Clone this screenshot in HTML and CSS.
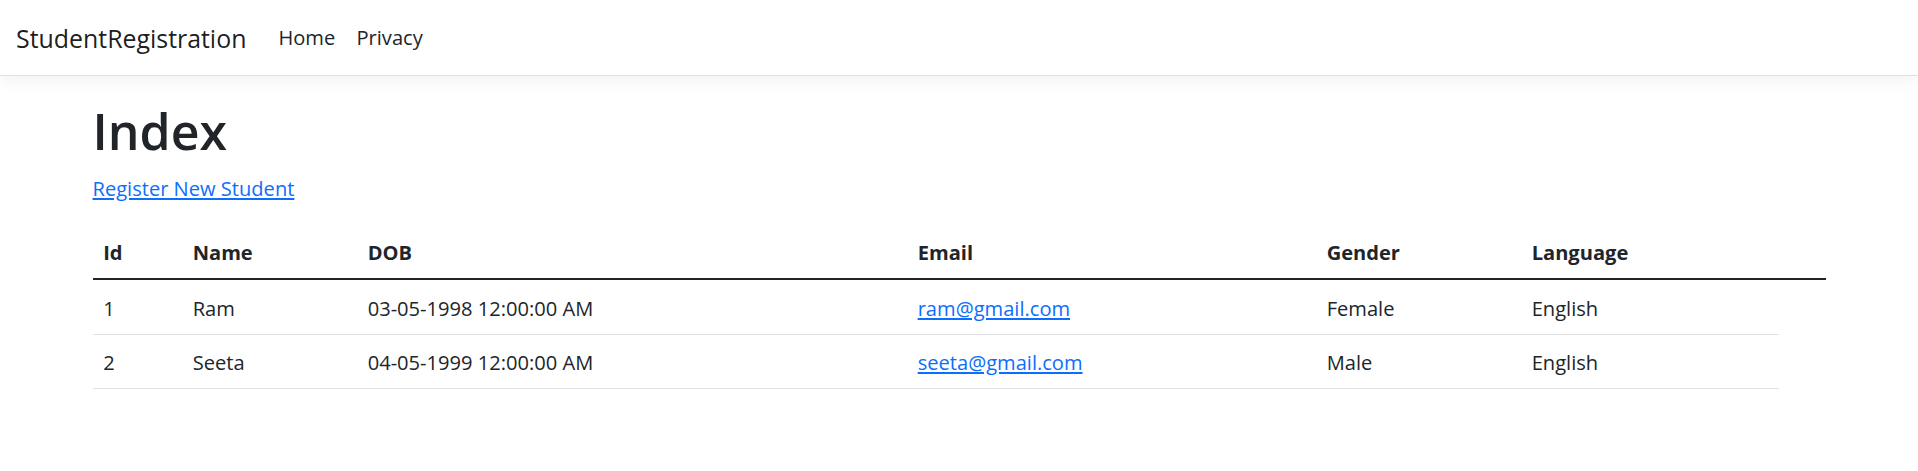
FILE: index.html
```html
<!DOCTYPE html>
<html lang="en">
<head>
<meta charset="utf-8">
<title>Index - StudentRegistration</title>
<link rel="stylesheet" href="styles.css">
</head>
<body>
<header>
  <nav class="navbar">
    <a class="brand" href="#">StudentRegistration</a>
    <ul class="nav">
      <li><a class="nav-link" href="#">Home</a></li>
      <li><a class="nav-link" href="#">Privacy</a></li>
    </ul>
  </nav>
</header>
<main class="container">
  <h1 class="title">Index</h1>
  <p class="actions"><a class="link" href="#">Register New Student</a></p>
  <table class="table">
    <colgroup>
      <col class="c-id">
      <col class="c-name">
      <col class="c-dob">
      <col class="c-email">
      <col class="c-gender">
      <col class="c-lang">
      <col class="c-extra">
    </colgroup>
    <thead>
      <tr>
        <th>Id</th>
        <th>Name</th>
        <th>DOB</th>
        <th>Email</th>
        <th>Gender</th>
        <th>Language</th>
        <th></th>
      </tr>
    </thead>
    <tbody>
      <tr>
        <td>1</td>
        <td>Ram</td>
        <td>03-05-1998 12:00:00 AM</td>
        <td><a class="link" href="#">ram@gmail.com</a></td>
        <td>Female</td>
        <td>English</td>
      </tr>
      <tr>
        <td>2</td>
        <td>Seeta</td>
        <td>04-05-1999 12:00:00 AM</td>
        <td><a class="link" href="#">seeta@gmail.com</a></td>
        <td>Male</td>
        <td>English</td>
      </tr>
    </tbody>
  </table>
</main>
</body>
</html>
```
FILE: styles.css
```css
* { box-sizing: border-box; }

html, body {
  margin: 0;
  padding: 0;
  background: #fff;
}

body {
  font-family: "Open Sans", "Noto Sans", "Liberation Sans", sans-serif;
  font-size: 20.1px;
  line-height: 32px;
  color: #212529;
}

.navbar {
  display: flex;
  align-items: flex-start;
  padding: 10.67px 16px;
  background: #fff;
  border-bottom: 1px solid #dee2e6;
  box-shadow: 0 5px 16px rgba(0, 0, 0, 0.05);
  margin-bottom: 21.33px;
}

.brand {
  display: block;
  padding: 7.67px 0 5.67px;
  margin-right: 21.33px;
  font-size: 24.9px;
  line-height: 40px;
  color: rgba(0, 0, 0, 0.9);
  text-decoration: none;
  white-space: nowrap;
}

.nav {
  display: flex;
  list-style: none;
  margin: 0;
  padding: 0;
}

.nav-link {
  display: block;
  padding: 11.67px 10.67px 9.67px;
  color: #212529;
  text-decoration: none;
}

.container {
  width: 1733px;
  margin: 0 auto;
}

.title {
  margin: 0 0 8.67px;
  padding-top: 2px;
  font-size: 50px;
  line-height: 64px;
  font-weight: 600;
}

.actions {
  margin: 0 0 20.33px;
  padding-top: 1px;
}

.link {
  color: #0d6efd;
  text-decoration: underline;
}

.table {
  width: 100%;
  table-layout: fixed;
  border-collapse: collapse;
  margin-bottom: 21.33px;
}

.c-id { width: 89.5px; }
.c-name { width: 175px; }
.c-dob { width: 550px; }
.c-email { width: 409px; }
.c-gender { width: 205px; }
.c-lang { width: 258px; }
.c-extra { width: 46.5px; }

.table th,
.table td {
  padding: 12.67px 10.67px 8.67px;
  text-align: left;
  vertical-align: top;
  border-bottom: 1px solid #dee2e6;
  white-space: nowrap;
}

.table th {
  font-weight: 700;
  padding-top: 11.67px;
  padding-bottom: 9.67px;
}

.table tbody {
  border-top: 2px solid #212529;
}
```
